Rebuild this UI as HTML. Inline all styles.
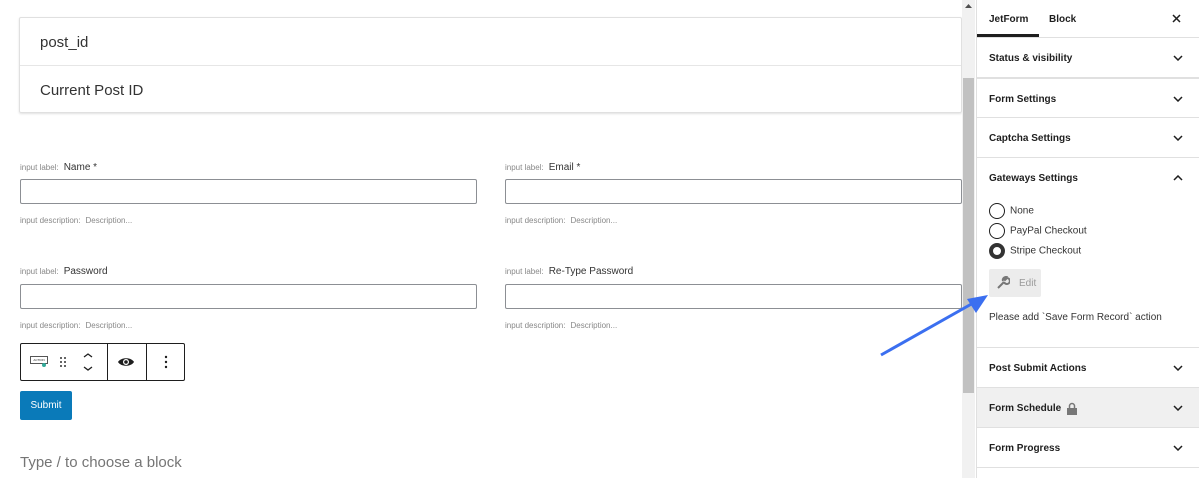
<!DOCTYPE html>
<html><head><style>
*{box-sizing:border-box;margin:0;padding:0}
body{width:1200px;height:478px;overflow:hidden;background:#fff;font-family:"Liberation Sans",sans-serif;position:relative;color:#1e1e1e}
.abs{position:absolute}
.card{left:19px;top:17px;width:943px;height:96px;border:1px solid #e0e0e0;box-shadow:0 1px 2px rgba(0,0,0,.12);border-radius:2px}
.card div{height:48px;line-height:50px;padding-left:20px;font-size:15px;color:#333}
.lbl{font-size:8px;color:#888}
.lbl b{font-weight:normal;font-size:10px;color:#333;margin-left:5px}
.inp{height:25px;border:1px solid #8c8f94;border-radius:2px;width:457px}
.desc{font-size:8px;color:#888}
.desc span{margin-left:5px}
.side{left:976px;top:0;width:224px;height:478px;border-left:1px solid #e0e0e0;background:#fff}
.row{position:absolute;left:0;width:222px;height:40px;border-top:1px solid #e0e0e0;font-size:10px;font-weight:bold;color:#1e1e1e;padding-left:12px;line-height:42px}
.row svg{position:absolute;right:16px;top:17px}
.radio{position:absolute;left:12px;font-size:10px;color:#333;line-height:16px}
.radio i{display:inline-block;width:16px;height:16px;border:1px solid #1e1e1e;border-radius:50%;vertical-align:middle;margin-right:5px}
</style></head><body>
<div class="abs card"><div style="border-bottom:1px solid #e6e6e6">post_id</div><div>Current Post ID</div></div>

<div class="abs lbl" style="left:20px;top:162px">input label:<b>Name *</b></div>
<div class="abs inp" style="left:20px;top:179px"></div>
<div class="abs desc" style="left:20px;top:216px">input description:<span>Description...</span></div>
<div class="abs lbl" style="left:505px;top:162px">input label:<b>Email *</b></div>
<div class="abs inp" style="left:505px;top:179px"></div>
<div class="abs desc" style="left:505px;top:216px">input description:<span>Description...</span></div>

<div class="abs lbl" style="left:20px;top:266px">input label:<b>Password</b></div>
<div class="abs inp" style="left:20px;top:284px"></div>
<div class="abs desc" style="left:20px;top:321px">input description:<span>Description...</span></div>
<div class="abs lbl" style="left:505px;top:266px">input label:<b>Re-Type Password</b></div>
<div class="abs inp" style="left:505px;top:284px"></div>
<div class="abs desc" style="left:505px;top:321px">input description:<span>Description...</span></div>

<div class="abs" style="left:20px;top:343px;width:165px;height:38px;border:1px solid #1e1e1e;border-radius:2px">
 <div class="abs" style="left:86px;top:0;width:1px;height:36px;background:#1e1e1e"></div>
 <div class="abs" style="left:125px;top:0;width:1px;height:36px;background:#1e1e1e"></div>
 <div class="abs" style="left:9px;top:12px;width:18px;height:8px;border:1px solid #555;font-size:3px;line-height:6px;text-align:center">ACTION</div>
 <div class="abs" style="left:21px;top:19px;width:4px;height:4px;background:#3a9;border-radius:50%"></div>
 <svg class="abs" style="left:38px;top:12px" width="8" height="12"><g fill="#333"><circle cx="2" cy="2" r="1"/><circle cx="6" cy="2" r="1"/><circle cx="2" cy="6" r="1"/><circle cx="6" cy="6" r="1"/><circle cx="2" cy="10" r="1"/><circle cx="6" cy="10" r="1"/></g></svg>
 <svg class="abs" style="left:61px;top:7px" width="12" height="22" fill="none" stroke="#1e1e1e" stroke-width="1.3"><path d="M2 6l4-3 4 3M2 16l4 3 4-3"/></svg>
 <svg class="abs" style="left:96px;top:11px" width="18" height="14"><path d="M1 7C4 2 14 2 17 7C14 12 4 12 1 7Z" fill="#1e1e1e"/><circle cx="9" cy="7" r="3" fill="#fff"/><circle cx="9" cy="7" r="1.8" fill="#1e1e1e"/></svg>
 <svg class="abs" style="left:143px;top:11px" width="4" height="14"><g fill="#1e1e1e"><circle cx="2" cy="2" r="1.2"/><circle cx="2" cy="7" r="1.2"/><circle cx="2" cy="12" r="1.2"/></g></svg>
</div>
<div class="abs" style="left:20px;top:391px;width:52px;height:29px;background:#0a7ab9;border-radius:2px;color:#fff;font-size:10px;line-height:30px;text-align:center">Submit</div>
<div class="abs" style="left:20px;top:454px;font-size:15px;color:#757575">Type / to choose a block</div>

<div class="abs" style="left:962px;top:0;width:13px;height:478px;background:#f1f1f1"></div>
<div class="abs" style="left:963px;top:78px;width:11px;height:315px;background:#c1c1c1"></div>
<svg class="abs" style="left:965px;top:3px" width="7" height="5"><path d="M0 5L3.5 1 7 5Z" fill="#505050"/></svg>

<div class="abs side">
 <div class="abs" style="left:12px;top:14px;font-size:10px;font-weight:bold">JetForm</div>
 <div class="abs" style="left:72px;top:14px;font-size:10px;font-weight:bold">Block</div>
 <div class="abs" style="left:0;top:34px;width:62px;height:3px;background:#1e1e1e"></div>
 <svg class="abs" style="left:195px;top:14px" width="9" height="9" stroke="#1e1e1e" stroke-width="1.5"><path d="M1 1l7 7M8 1L1 8"/></svg>
 <div class="row" style="top:37px">Status &amp; visibility<svg width="10" height="6" fill="none" stroke="#1e1e1e" stroke-width="1.5"><path d="M1 1l4 4 4-4"/></svg></div>
 <div class="row" style="top:77px;border-top-width:2px">Form Settings<svg width="10" height="6" fill="none" stroke="#1e1e1e" stroke-width="1.5"><path d="M1 1l4 4 4-4"/></svg></div>
 <div class="row" style="top:117px">Captcha Settings<svg width="10" height="6" fill="none" stroke="#1e1e1e" stroke-width="1.5"><path d="M1 1l4 4 4-4"/></svg></div>
 <div class="row" style="top:157px">Gateways Settings<svg width="10" height="6" fill="none" stroke="#1e1e1e" stroke-width="1.5"><path d="M1 5l4-4 4 4"/></svg></div>
 <div class="radio" style="top:203px"><i></i>None</div>
 <div class="radio" style="top:223px"><i></i>PayPal Checkout</div>
 <div class="radio" style="top:243px"><i style="border:4px solid #333"></i>Stripe Checkout</div>
 <div class="abs" style="left:12px;top:269px;width:52px;height:28px;background:#ececec;border-radius:2px;font-size:10px;color:#999;line-height:30px;padding-left:30px">Edit</div>
 <svg class="abs" style="left:19px;top:276px" width="14" height="14"><path d="M2 12L8 6M8 6a3 3 0 1 0 3-4l-2 2-1-1 2-2a3 3 0 0 0-3 4" stroke="#777" stroke-width="2" fill="none"/></svg>
 <div class="abs" style="left:12px;top:312px;font-size:10px;color:#333">Please add `Save Form Record` action</div>
 <div class="row" style="top:347px">Post Submit Actions<svg width="10" height="6" fill="none" stroke="#1e1e1e" stroke-width="1.5"><path d="M1 1l4 4 4-4"/></svg></div>
 <div class="row" style="top:387px;background:#f0f0f0">Form Schedule<svg style="position:static;vertical-align:middle;margin-left:6px" width="10" height="13"><path d="M2.5 6V4a2.5 2.5 0 0 1 5 0v2" stroke="#777" stroke-width="1.5" fill="none"/><rect x="0" y="6" width="10" height="7" fill="#777"/></svg><svg width="10" height="6" fill="none" stroke="#1e1e1e" stroke-width="1.5"><path d="M1 1l4 4 4-4"/></svg></div>
 <div class="row" style="top:427px">Form Progress<svg width="10" height="6" fill="none" stroke="#1e1e1e" stroke-width="1.5"><path d="M1 1l4 4 4-4"/></svg></div>
 <div class="abs" style="left:0;top:467px;width:222px;height:1px;background:#e0e0e0"></div>
</div>

<svg class="abs" style="left:875px;top:290px" width="120" height="70"><path d="M6 65L100 12" stroke="#3b6ff0" stroke-width="3"/><path d="M113 5L92 9 101 23Z" fill="#3b6ff0"/></svg>
</body></html>
